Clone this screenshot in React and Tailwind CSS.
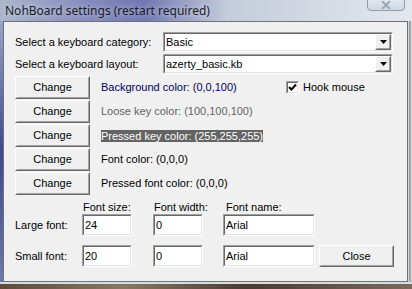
import React from "react";

const ui = { fontFamily: '"Liberation Sans", Arial, sans-serif' };

const Sunken = ({ className = "", children }) => (
  <div className={`border border-t-[#a0a0a0] border-l-[#a0a0a0] border-b-white border-r-white ${className}`}>
    <div className="w-full h-full border border-t-[#696969] border-l-[#696969] border-b-[#e3e3e3] border-r-[#e3e3e3] bg-white flex items-center">
      {children}
    </div>
  </div>
);

const Raised = ({ className = "", children }) => (
  <div className={`border border-t-white border-l-white border-b-[#696969] border-r-[#696969] ${className}`}>
    <div className="w-full h-full border border-t-[#f0f0f0] border-l-[#f0f0f0] border-b-[#a0a0a0] border-r-[#a0a0a0] bg-[#f0f0f0] flex items-center justify-center">
      {children}
    </div>
  </div>
);

const Combo = ({ value }) => (
  <Sunken className="w-[230px] h-[20px]">
    <span className="flex-1 pl-[1px] text-black">{value}</span>
    <Raised className="w-[16px] h-[16px]">
      <svg width="7" height="4" viewBox="0 0 7 4">
        <polygon points="0,0 7,0 3.5,4" fill="#000" />
      </svg>
    </Raised>
  </Sunken>
);

const ChangeButton = () => (
  <Raised className="w-[75px] h-[23px]">
    <span className="text-black">Change</span>
  </Raised>
);

const ColorRow = ({ children }) => (
  <div className="flex items-center gap-[11px]">
    <ChangeButton />
    {children}
  </div>
);

const TextBox = ({ value, className }) => (
  <Sunken className={`h-[22px] ${className}`}>
    <span className="pl-[1px] text-black">{value}</span>
  </Sunken>
);

export default function App() {
  return (
    <div
      className="w-[412px] h-[289px] relative overflow-hidden flex flex-col bg-[linear-gradient(90deg,#aab7ca_0%,#8a90bf_18%,#7077b2_35%,#c3ccda_55%,#e3e8ee_100%)] text-[11px]"
      style={ui}
    >
      <div className="h-[21px] flex items-center pl-[5px]">
        <span className="text-[12px] text-[#1c1c28]" style={{ fontFamily: '"Noto Sans", "Open Sans", sans-serif', textShadow: "0 0 6px rgba(255,255,255,0.7)" }}>
          NohBoard settings (restart required)
        </span>
      </div>
      <div className="absolute left-[367px] top-[-6px] w-[38px] h-[17px] rounded-b-[4px] border border-[#8d9cad] bg-[linear-gradient(#e9eef3,#cfd8e2)] flex items-end justify-center pb-[1px]">
        <svg width="10" height="8" viewBox="0 0 10 8">
          <path d="M1 0 L9 8 M9 0 L1 8" stroke="#9aa6b4" strokeWidth="2" />
        </svg>
      </div>

      <div className="flex flex-1">
        <div className="w-[3px] bg-[linear-gradient(#9aa3c8,#3b4a8f_50%,#6d79a8)]" />
        <div className="w-[405px] border border-[#6e7275] bg-[#f0f0f0] pl-[11px] pt-[10px] flex flex-col">
          <div className="flex items-center h-[20px]">
            <span className="w-[148px] text-black">Select a keyboard category:</span>
            <Combo value="Basic" />
          </div>
          <div className="flex items-center h-[20px] mt-[2px]">
            <span className="w-[148px] text-black">Select a keyboard layout:</span>
            <Combo value="azerty_basic.kb" />
          </div>

          <div className="flex flex-col gap-px mt-[2px]">
            <ColorRow>
              <div className="flex items-center">
                <span className="w-[185px] text-[#000064]">Background color: (0,0,100)</span>
                <Sunken className="w-[13px] h-[13px]">
                  <svg width="9" height="9" viewBox="0 0 9 9">
                    <path d="M1 4 L3.5 6.5 L8 1.5" stroke="#000" strokeWidth="2" fill="none" />
                  </svg>
                </Sunken>
                <span className="ml-[4px] text-black">Hook mouse</span>
              </div>
            </ColorRow>
            <ColorRow>
              <span className="text-[#646464]">Loose key color: (100,100,100)</span>
            </ColorRow>
            <ColorRow>
              <span className="text-white bg-[#646464] leading-[12px]">Pressed key color: (255,255,255)</span>
            </ColorRow>
            <ColorRow>
              <span className="text-black">Font color: (0,0,0)</span>
            </ColorRow>
            <ColorRow>
              <span className="text-black">Pressed font color: (0,0,0)</span>
            </ColorRow>
          </div>

          <div className="flex h-[14px] items-center mt-[5px] text-black">
            <span className="ml-[68px] w-[71px]">Font size:</span>
            <span className="w-[72px]">Font width:</span>
            <span>Font name:</span>
          </div>
          <div className="flex items-center text-black">
            <span className="w-[67px]">Large font:</span>
            <TextBox value="24" className="w-[50px]" />
            <TextBox value="0" className="w-[50px] ml-[21px]" />
            <TextBox value="Arial" className="w-[92px] ml-[20px]" />
          </div>
          <div className="flex items-center mt-[9px] text-black">
            <span className="w-[67px]">Small font:</span>
            <TextBox value="20" className="w-[50px]" />
            <TextBox value="0" className="w-[50px] ml-[21px]" />
            <TextBox value="Arial" className="w-[92px] ml-[20px]" />
            <Raised className="w-[75px] h-[22px] ml-[4px]">
              <span>Close</span>
            </Raised>
          </div>
        </div>
        <div className="w-[4px] bg-[linear-gradient(90deg,#e8ecf0,#8a8f96,#f4f4f4)]" />
      </div>
      <div className="h-[7px] bg-[linear-gradient(90deg,#5d4a3a,#8a7762_30%,#4a3a30_60%,#7b6a5c)] border-t-2 border-[#d8dde2]" />
    </div>
  );
}
